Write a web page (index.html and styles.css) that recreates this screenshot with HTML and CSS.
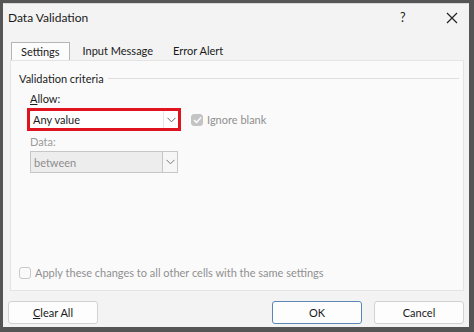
FILE: index.html
```html
<!DOCTYPE html>
<html lang="en">
<head>
    <meta charset="UTF-8">
    <title>Data Validation</title>
    <link rel="stylesheet" href="styles.css">
</head>
<body>
    <div class="screen">
        <div class="dialog">
            <div class="title-bar">
                <span class="title">Data Validation</span>
                <span class="help">?</span>
                <svg class="close" width="12" height="12" viewBox="0 0 12 12"><path d="M1 1L11 11M11 1L1 11" stroke="#222" stroke-width="1.2"/></svg>
            </div>
            <div class="tabs">
                <span class="tab active">Settings</span>
                <span class="tab">Input Message</span>
                <span class="tab">Error Alert</span>
            </div>
            <div class="panel">
                <div class="group-title">
                    <span>Validation criteria</span>
                    <span class="group-line"></span>
                </div>
                <div class="field-label"><u>A</u>llow:</div>
                <div class="allow-row">
                    <div class="highlight">
                        <div class="select">
                            <span class="select-text">Any value</span>
                            <span class="chevron"><svg width="9" height="6" viewBox="0 0 9 6"><path d="M0.5 0.8L4.5 4.8L8.5 0.8" fill="none" stroke="#666" stroke-width="1"/></svg></span>
                        </div>
                    </div>
                    <label class="check disabled">
                        <span class="box checked"><svg width="9" height="8" viewBox="0 0 9 8"><path d="M1 4L3.5 6.5L8 1.5" fill="none" stroke="#fff" stroke-width="1.4"/></svg></span>
                        Ignore blank
                    </label>
                </div>
                <div class="field-label disabled">Data:</div>
                <div class="select disabled-select">
                    <span class="select-text">between</span>
                    <span class="chevron"><svg width="9" height="6" viewBox="0 0 9 6"><path d="M0.5 0.8L4.5 4.8L8.5 0.8" fill="none" stroke="#777" stroke-width="1"/></svg></span>
                </div>
                <div class="spacer"></div>
                <label class="check disabled apply">
                    <span class="box"></span>
                    Apply these changes to all other cells with the same settings
                </label>
            </div>
            <div class="buttons">
                <button class="btn"><u>C</u>lear All</button>
                <span class="grow"></span>
                <button class="btn default">OK</button>
                <button class="btn">Cancel</button>
            </div>
        </div>
    </div>
</body>
</html>
```

FILE: styles.css
```css
html, body {
    margin: 0;
    padding: 0;
}
body {
    font-family: Lato, "Noto Sans", sans-serif;
    font-size: 11px;
    line-height: 15px;
    color: #1a1a1a;
    background: #4a4a4a;
}
.screen {
    width: 474px;
    height: 332px;
    background: #555;
    padding: 3px 5px 6px 3px;
    box-sizing: border-box;
}
.dialog {
    height: 100%;
    background: #f3f3f3;
    display: flex;
    flex-direction: column;
    border-top: 1px solid #d8d8d8;
}
.title-bar {
    height: 27px;
    display: flex;
    align-items: center;
    padding-left: 5px;
}
.title {
    font-size: 12px;
    flex: 1;
}
.help {
    font-size: 12.5px;
    width: 10px;
    margin-right: 36px;
}
.close {
    margin-right: 11px;
}
.tabs {
    display: flex;
    height: 18px;
    margin: 11px 0 0 8px;
    align-items: flex-end;
}
.tab {
    padding: 0 10px 2px;
}
.tab.active {
    border: 1px solid #b5b5b5;
    border-bottom: 0;
    background: #fcfcfc;
    padding: 1px 9px 1px;
    height: 15px;
    margin-right: 3px;
}
.panel {
    margin: 0 5px 0 7px;
    height: 231px;
    background: #fafafa;
    border: 1px solid #e4e4e4;
    box-sizing: border-box;
    display: flex;
    flex-direction: column;
    padding: 10px 0 0 8px;
}
.group-title {
    display: flex;
    align-items: center;
    gap: 4px;
    padding-right: 4px;
}
.group-line {
    flex: 1;
    height: 1px;
    background: #dedede;
}
.field-label {
    margin: 5px 0 2px 11px;
}
.field-label.disabled {
    color: #9a9a9a;
    margin-top: 3px;
}
.allow-row {
    display: flex;
    align-items: center;
    margin-left: 8px;
}
.highlight {
    border: 3px solid #e0141f;
}
.select {
    width: 148px;
    height: 17px;
    display: flex;
    align-items: center;
    background: #fff;
}
.select-text {
    flex: 1;
    padding-left: 3px;
}
.chevron {
    width: 14px;
    height: 100%;
    display: flex;
    align-items: center;
    justify-content: center;
    border-left: 1px solid #e6e6e6;
}
.disabled-select {
    margin-left: 11px;
    width: 148px;
    height: 22px;
    box-sizing: border-box;
    border: 1px solid #c6c6c6;
    background: #ededed;
    color: #8d8d8d;
}
.disabled-select .chevron {
    border-left: 1px solid #c6c6c6;
    width: 14px;
    background: #f6f6f6;
}
.check {
    display: flex;
    align-items: center;
    gap: 4px;
}
.check.disabled {
    color: #909090;
}
.allow-row .check {
    margin-left: 10px;
}
.box {
    width: 12px;
    height: 12px;
    border-radius: 3px;
    border: 1px solid #c8c8c8;
    box-sizing: border-box;
    background: #fafafa;
    display: flex;
    align-items: center;
    justify-content: center;
}
.box.checked {
    background: #c4c4c4;
    border-color: #c4c4c4;
}
.spacer {
    flex: 1;
}
.apply {
    margin-bottom: 10px;
}
.buttons {
    display: flex;
    padding: 10px 5px 0 5px;
}
.grow {
    flex: 1;
}
.btn {
    width: 90px;
    height: 23px;
    font-family: inherit;
    font-size: 11px;
    color: #1a1a1a;
    background: #fdfdfd;
    border: 1px solid #d2d2d2;
    border-radius: 3px;
    margin-left: 12px;
    padding: 0;
}
.btn:first-child {
    margin-left: 0;
}
.btn.default {
    border-color: #5a86b8;
}
```
